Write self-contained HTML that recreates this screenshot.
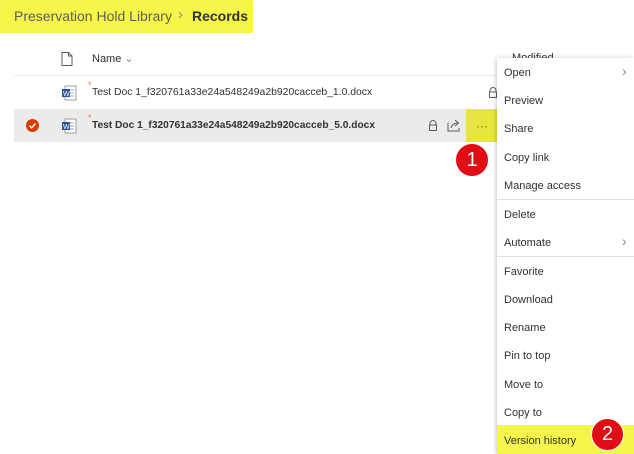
<!DOCTYPE html>
<html><head><style>
body{margin:0;width:634px;height:454px;overflow:hidden;background:#fff;font-family:"Liberation Sans",sans-serif;position:relative;color:#323130}
.a{position:absolute;white-space:nowrap}
.crumb{left:0;top:0;width:253px;height:33px;background:#f6f64a}
.item{position:absolute;left:504px;font-size:11px;color:#323130}
.sep{position:absolute;left:497px;width:137px;height:1px;background:#e1dfdd}
.circ{position:absolute;border-radius:50%;background:#e00d15;color:#fff;font-size:20px;text-align:center;border:1px solid #fff}
</style></head><body>
<div class="a crumb"></div>
<div class="a" style="left:14px;top:8px;font-size:14px;color:#605e5c">Preservation Hold Library</div>
<div class="a" style="left:178px;top:6px;font-size:15px;color:#8a8886">&#8250;</div>
<div class="a" style="left:192px;top:8px;font-size:14px;font-weight:bold;color:#323130">Records</div>

<svg class="a" style="left:61px;top:52px" width="12" height="14"><path d="M1 .5h6.5l3.5 3.5v9.5H1z M7.5 .5v3.5h3.5" fill="none" stroke="#605e5c"/></svg>
<div class="a" style="left:92px;top:52px;font-size:11px;color:#323130">Name <span style="color:#8a8886">&#8964;</span></div>
<div class="a" style="left:512px;top:52px;font-size:11px;color:#323130">Modified</div>
<div class="a" style="left:14px;top:75px;width:483px;height:1px;background:#edebe9"></div>

<div class="a" style="left:14px;top:109px;width:483px;height:33px;background:#edebe9"></div>
<div class="a" style="left:466px;top:109px;width:31px;height:33px;background:#e6e63e"></div>
<div class="a" style="left:476px;top:119px;font-size:12px;color:#605e5c">···</div>

<div class="a" style="left:26px;top:119px;width:13px;height:13px;border-radius:50%;background:#d83b01"></div>
<svg class="a" style="left:26px;top:119px" width="13" height="13"><path d="M3.5 6.8l2 2 4-4.3" fill="none" stroke="#fff" stroke-width="1.5"/></svg>

<svg class="a" style="left:61px;top:85px" width="16" height="16"><rect x="4" y="1" width="11" height="14" fill="#fff" stroke="#8a8886" stroke-width=".8"/><path d="M8 5h5M8 8h5M8 11h5" stroke="#8a8886" stroke-width=".8"/><rect x="1" y="4" width="8" height="8" fill="#2b579a"/><text x="2" y="11" font-size="7" fill="#fff" font-family="Liberation Sans">W</text></svg>
<svg class="a" style="left:61px;top:118px" width="16" height="16"><rect x="4" y="1" width="11" height="14" fill="#fff" stroke="#8a8886" stroke-width=".8"/><path d="M8 5h5M8 8h5M8 11h5" stroke="#8a8886" stroke-width=".8"/><rect x="1" y="4" width="8" height="8" fill="#2b579a"/><text x="2" y="11" font-size="7" fill="#fff" font-family="Liberation Sans">W</text></svg>
<div class="a" style="left:88px;top:80px;font-size:9px;color:#e8793a">*</div>
<div class="a" style="left:88px;top:113px;font-size:9px;color:#e8793a">*</div>
<div class="a" style="left:92px;top:87px;font-size:10.4px">Test Doc 1_f320761a33e24a548249a2b920cacceb_1.0.docx</div>
<div class="a" style="left:92px;top:120px;font-size:10.2px;font-weight:bold">Test Doc 1_f320761a33e24a548249a2b920cacceb_5.0.docx</div>
<svg class="a" style="left:428px;top:120px" width="10" height="11"><path d="M2 5V3.5a3 3 0 0 1 6 0V5M1.5 5h7v5.5h-7z" fill="none" stroke="#605e5c"/></svg>
<svg class="a" style="left:488px;top:87px" width="10" height="11"><path d="M2 5V3.5a3 3 0 0 1 6 0V5M1.5 5h7v5.5h-7z" fill="none" stroke="#605e5c"/></svg>
<svg class="a" style="left:447px;top:119px" width="14" height="13"><path d="M1 4v8h11V9 M4 9c1-4 4-5 7-5M8 1l3.5 3L8 7" fill="none" stroke="#605e5c"/></svg>

<div class="a" style="left:497px;top:58px;width:137px;height:396px;background:#fff;box-shadow:-1px 0 4px rgba(0,0,0,.22)"></div>
<div class="item" style="top:67px">Open</div><div class="a" style="left:622px;top:63px;font-size:14px;color:#8a8886">&#8250;</div>
<div class="item" style="top:95px">Preview</div>
<div class="item" style="top:123px">Share</div>
<div class="item" style="top:152px">Copy link</div>
<div class="item" style="top:180px">Manage access</div>
<div class="sep" style="top:199px"></div>
<div class="item" style="top:209px">Delete</div>
<div class="item" style="top:237px">Automate</div><div class="a" style="left:622px;top:233px;font-size:14px;color:#8a8886">&#8250;</div>
<div class="sep" style="top:256px"></div>
<div class="item" style="top:266px">Favorite</div>
<div class="item" style="top:294px">Download</div>
<div class="item" style="top:322px">Rename</div>
<div class="item" style="top:350px">Pin to top</div>
<div class="item" style="top:379px">Move to</div>
<div class="item" style="top:407px">Copy to</div>
<div class="a" style="left:497px;top:425px;width:137px;height:29px;background:#f6f64a"></div>
<div class="item" style="top:435px">Version history</div>

<div class="circ" style="left:455px;top:143px;width:32px;height:32px;line-height:32px">1</div>
<div class="circ" style="left:591px;top:418px;width:31px;height:31px;line-height:31px">2</div>
</body></html>
